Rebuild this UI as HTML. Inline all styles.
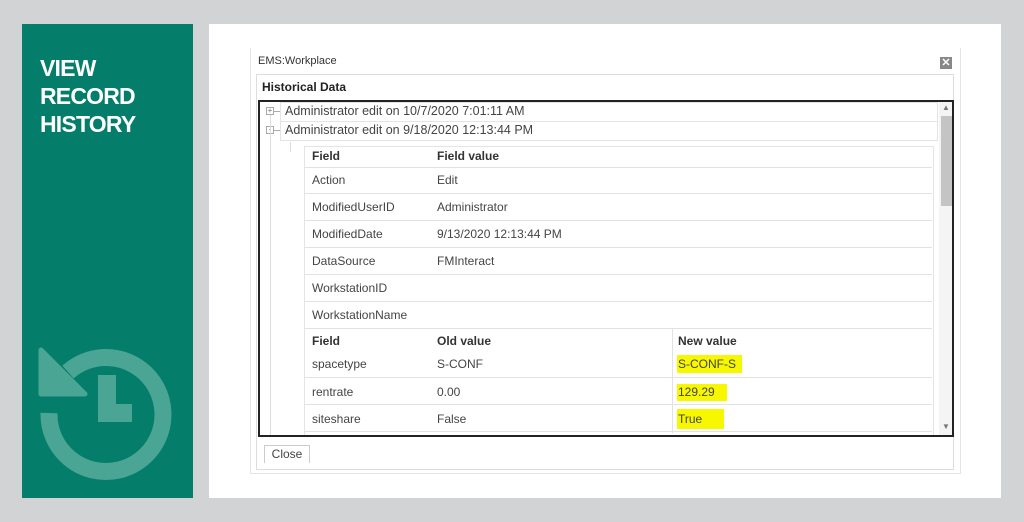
<!DOCTYPE html>
<html><head><meta charset="utf-8"><style>
*{margin:0;padding:0;box-sizing:border-box}
body{width:1024px;height:522px;background:#d1d3d4;position:relative;overflow:hidden;font-family:"Liberation Sans",Arial,sans-serif}
.a{position:absolute}
.t{position:absolute;font-size:12px;color:#444;white-space:nowrap}
.b{font-weight:bold;color:#333}
.hl{background:#f7f700;padding:0 2px 0 0}
.line{position:absolute;height:1px;background:#e2e2e2}
</style></head><body>
<div class="a" style="left:22px;top:24px;width:171px;height:474px;background:#047d6a"></div>
<div class="a" style="left:40px;top:54px;color:#fff;font-weight:bold;font-size:23px;line-height:28px;letter-spacing:-0.8px">VIEW<br>RECORD<br>HISTORY</div>
<svg class="a" style="left:22px;top:330px" width="171" height="168" viewBox="0 0 171 168">
<path d="M46 42 A57 57 0 1 1 27 83" fill="none" stroke="#4aa594" stroke-width="17" stroke-linecap="butt"/>
<path d="M19 20 L19 64 L63 64 Z" fill="#4aa594" stroke="#4aa594" stroke-width="5" stroke-linejoin="round"/>
<path d="M85 45 L85 83 L110 83" fill="none" stroke="#4aa594" stroke-width="18"/>
</svg>
<div class="a" style="left:209px;top:24px;width:792px;height:474px;background:#fff"></div>
<div class="a" style="left:250px;top:48px;width:711px;height:426px;border:1px solid #e4e4e4;border-top:none;background:#fff"></div>
<div class="t" style="left:258px;top:55px;font-size:11px;color:#333">EMS:Workplace</div>
<div class="a" style="left:940px;top:57px;width:12px;height:12px;background:#888;color:#fff;font-size:11px;line-height:12px;text-align:center;font-weight:bold">✕</div>
<div class="a" style="left:256px;top:74px;width:698px;height:396px;border:1px solid #ddd"></div>
<div class="t b" style="left:262px;top:80px;color:#222">Historical Data</div>
<div class="a" style="left:258px;top:100px;width:696px;height:337px;border:2px solid #222;border-right-width:2px;background:#fff;overflow:hidden">
 <div class="a" style="left:679px;top:0;width:14px;height:333px;background:#f4f4f4"></div>
 <div class="a" style="left:681px;top:14px;width:11px;height:90px;background:#c4c4c4"></div>
 <div class="t" style="left:682px;top:1px;font-size:8px;color:#777">▲</div>
 <div class="t" style="left:682px;top:320px;font-size:8px;color:#777">▼</div>
 <div class="a" style="left:20px;top:0;width:658px;height:20px;border:1px solid #e4e4e4"></div>
 <div class="a" style="left:20px;top:19px;width:658px;height:20px;border:1px solid #e4e4e4"></div>
 <div class="a" style="left:6px;top:5px;width:8px;height:8px;border:1px solid #aaa;font-size:8px;line-height:6px;text-align:center;color:#777">+</div>
 <div class="a" style="left:6px;top:24px;width:8px;height:8px;border:1px solid #aaa;font-size:8px;line-height:6px;text-align:center;color:#777">-</div>
 <div class="a" style="left:10px;top:13px;width:1px;height:320px;background:#ddd"></div>
 <div class="a" style="left:14px;top:9px;width:6px;height:1px;background:#aaa"></div>
 <div class="a" style="left:14px;top:28px;width:6px;height:1px;background:#aaa"></div>
 <div class="a" style="left:30px;top:40px;width:1px;height:10px;background:#ddd"></div>
 <div class="t" style="left:25px;top:2px;font-size:12.5px;color:#444">Administrator edit on 10/7/2020 7:01:11 AM</div>
 <div class="t" style="left:25px;top:21px;font-size:12.5px;color:#444">Administrator edit on 9/18/2020 12:13:44 PM</div>
 <div class="a" style="left:44px;top:44px;width:630px;height:300px;border:1px solid #e4e4e4"></div>
</div>
<div class="line" style="left:304px;top:167px;width:628px"></div>
<div class="line" style="left:304px;top:193px;width:628px"></div>
<div class="line" style="left:304px;top:220px;width:628px"></div>
<div class="line" style="left:304px;top:247px;width:628px"></div>
<div class="line" style="left:304px;top:274px;width:628px"></div>
<div class="line" style="left:304px;top:301px;width:628px"></div>
<div class="line" style="left:304px;top:328px;width:628px"></div>
<div class="line" style="left:304px;top:377px;width:628px"></div>
<div class="line" style="left:304px;top:404px;width:628px"></div>
<div class="line" style="left:304px;top:431px;width:628px"></div>
<div class="a" style="left:672px;top:329px;width:1px;height:104px;background:#e2e2e2"></div>
<div class="t b" style="left:312px;top:149px">Field</div><div class="t b" style="left:437px;top:149px">Field value</div>
<div class="t" style="left:312px;top:173px">Action</div><div class="t" style="left:437px;top:173px">Edit</div>
<div class="t" style="left:312px;top:200px">ModifiedUserID</div><div class="t" style="left:437px;top:200px">Administrator</div>
<div class="t" style="left:312px;top:227px">ModifiedDate</div><div class="t" style="left:437px;top:227px">9/13/2020 12:13:44 PM</div>
<div class="t" style="left:312px;top:254px">DataSource</div><div class="t" style="left:437px;top:254px">FMInteract</div>
<div class="t" style="left:312px;top:281px">WorkstationID</div>
<div class="t" style="left:312px;top:308px">WorkstationName</div>
<div class="t b" style="left:312px;top:334px">Field</div><div class="t b" style="left:437px;top:334px">Old value</div><div class="t b" style="left:678px;top:334px">New value</div>
<div class="t" style="left:312px;top:357px">spacetype</div><div class="t" style="left:437px;top:357px">S-CONF</div><div class="t hl" style="left:677px;top:355px;padding:2px 6px 2px 1px">S-CONF-S</div>
<div class="t" style="left:312px;top:385px">rentrate</div><div class="t" style="left:437px;top:385px">0.00</div><div class="t hl" style="left:677px;top:384px;padding:1px 12px 2px 1px">129.29</div>
<div class="t" style="left:312px;top:412px">siteshare</div><div class="t" style="left:437px;top:412px">False</div><div class="t hl" style="left:677px;top:409px;padding:3px 22px 3px 1px">True</div>
<div class="a" style="left:264px;top:445px;width:46px;height:18px;border:1px solid #ccc;border-bottom:none;font-size:12px;color:#444;text-align:center;line-height:17px">Close</div>
</body></html>
